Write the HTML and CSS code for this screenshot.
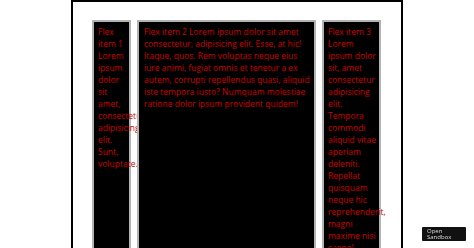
FILE: index.html
```html
<!DOCTYPE html>
<html>
<head>
<meta charset="utf-8">
<link rel="stylesheet" href="styles.css">
</head>
<body>
<div class="container">
  <div class="item item-1">Flex item 1 Lorem ipsum dolor sit amet, consectetur adipisicing elit. Sunt, voluptate.</div>
  <div class="item item-2">Flex item 2 Lorem ipsum dolor sit amet consectetur, adipisicing elit. Esse, at hic! Itaque, quos. Rem voluptas neque eius iure animi, fugiat omnis et tenetur a ex autem, corrupti repellendus quasi, aliquid iste tempora iusto? Numquam molestiae ratione dolor ipsum provident quidem!</div>
  <div class="item item-3">Flex item 3 Lorem ipsum dolor sit, amet consectetur adipisicing elit. Tempora commodi aliquid vitae aperiam deleniti. Repellat quisquam neque hic reprehenderit, magni maxime nisi saepe!</div>
</div>
<a class="sandbox" href="#">Open Sandbox</a>
</body>
</html>
```
FILE: styles.css
```css
html, body {
  margin: 0;
  padding: 0;
  background: #fff;
  height: 100%;
  overflow: hidden;
}
body {
  font-family: "Open Sans", "Liberation Sans", sans-serif;
}
.container {
  box-sizing: border-box;
  width: 332px;
  margin: 0 auto;
  border: 2px solid #000;
  padding: 18px 20px 18px 19px;
  display: flex;
  gap: 6px;
  min-height: 300px;
}
.item {
  box-sizing: border-box;
  flex: 0 0 auto;
  min-width: 0;
  background: #000;
  color: #cc0000;
  border: 2px solid #b3b3b3;
  padding: 4px 2px 4px 4px;
  font-size: 8.5px;
  line-height: 12px;
}
.item-1 { width: 39px; }
.item-2 { width: 179px; padding-left: 5px; }
.item-3 { width: 59px; }
.sandbox {
  position: fixed;
  right: 8px;
  bottom: 7px;
  width: 44px;
  box-sizing: border-box;
  background: #111;
  color: #ddd;
  font-size: 6px;
  line-height: 6px;
  padding: 1px 5px 1px 5px;
  text-decoration: none;
  border-radius: 1px;
}
```
